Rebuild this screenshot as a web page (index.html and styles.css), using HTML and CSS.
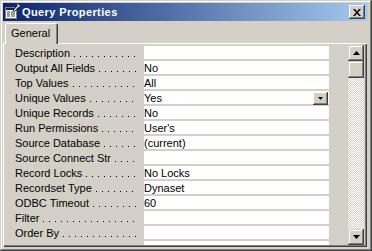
FILE: index.html
```html
<!DOCTYPE html>
<html>
    <head>
        <meta charset="utf-8" />
        <title>Query Properties</title>
        <link rel="stylesheet" href="styles.css">
    </head>
    <body>
        <div class="window">
            <div class="titlebar">
                <svg class="title-icon" width="16" height="16" viewBox="0 0 16 16">
                    <rect x="1.5" y="3.5" width="11" height="11" fill="#fff" stroke="#808080" />
                    <rect x="2" y="4" width="10" height="2" fill="#0a246a" />
                    <path d="M3 8h3M7 8h4M3 10h3M7 10h4M3 12h3M7 12h4" stroke="#404040" />
                    <path d="M9 6l5-5 1.5 1.5-5 5z" fill="#d4d0c8" stroke="#000" stroke-width="0.8" />
                    <path d="M13 1h2v2" stroke="#fff" fill="none" />
                </svg>
                <span class="title">Query Properties</span>
                <div class="close">
                    <svg width="8" height="7" viewBox="0 0 8 7">
                        <path d="M0 0h2l2 2.5 2-2.5h2l-3 3.5 3 3.5h-2l-2-2.5-2 2.5h-2l3-3.5z" fill="#000" />
                    </svg>
                </div>
            </div>

            <div class="tabs">
                <div class="tab">General</div>
            </div>

            <div class="panel">
                <div class="sheet">
                    <div class="row"><span class="label">Description<span class="dots"></span></span><span class="value"></span></div>
                    <div class="row"><span class="label">Output All Fields<span class="dots"></span></span><span class="value">No</span></div>
                    <div class="row"><span class="label">Top Values<span class="dots"></span></span><span class="value">All</span></div>
                    <div class="row"><span class="label">Unique Values<span class="dots"></span></span><span class="value combo"><span class="combo-text">Yes</span><span class="drop"><svg width="5" height="3" viewBox="0 0 5 3"><path d="M0 0h5l-2.5 3z" fill="#000" /></svg></span></span></div>
                    <div class="row"><span class="label">Unique Records<span class="dots"></span></span><span class="value">No</span></div>
                    <div class="row"><span class="label">Run Permissions<span class="dots"></span></span><span class="value">User's</span></div>
                    <div class="row"><span class="label">Source Database<span class="dots"></span></span><span class="value">(current)</span></div>
                    <div class="row"><span class="label">Source Connect Str<span class="dots"></span></span><span class="value"></span></div>
                    <div class="row"><span class="label">Record Locks<span class="dots"></span></span><span class="value">No Locks</span></div>
                    <div class="row"><span class="label">Recordset Type<span class="dots"></span></span><span class="value">Dynaset</span></div>
                    <div class="row"><span class="label">ODBC Timeout<span class="dots"></span></span><span class="value">60</span></div>
                    <div class="row"><span class="label">Filter<span class="dots"></span></span><span class="value"></span></div>
                    <div class="row"><span class="label">Order By<span class="dots"></span></span><span class="value"></span></div>
                    <div class="row"><span class="label"></span><span class="value"></span></div>
                </div>

                <div class="scrollbar">
                    <div class="sb-btn">
                        <svg width="7" height="4" viewBox="0 0 7 4"><path d="M3.5 0l3.5 4h-7z" fill="#000" /></svg>
                    </div>
                    <div class="sb-track">
                        <div class="sb-thumb"></div>
                    </div>
                    <div class="sb-btn">
                        <svg width="7" height="4" viewBox="0 0 7 4"><path d="M0 0h7l-3.5 4z" fill="#000" /></svg>
                    </div>
                </div>
            </div>
        </div>
    </body>
</html>
```

FILE: styles.css
```css
html, body { margin: 0; padding: 0; width: 100%; height: 100%; overflow: hidden }
body {
    background: #d4d0c8;
}

/* Win2000 style window frame */
.window {
    width: 372px;
    height: 251px;
    box-sizing: border-box;
    padding: 3px 4px 0 3px;
    background: #d4d0c8;
    box-shadow: inset -1px -1px #404040, inset 1px 1px #d4d0c8, inset -2px -2px #808080, inset 2px 2px #fff;
    font: 11px "Liberation Sans", Arial, sans-serif;
    color: #000;
}

.titlebar {
    height: 18px;
    display: flex;
    align-items: center;
    padding: 0 3px 0 1px;
    background: linear-gradient(to right, #0a246a, #a6caf0);
}
.title-icon {
    flex: none;
    margin-right: 2px;
}
.title {
    color: #fff;
    font-weight: bold;
    letter-spacing: 0.4px;
}
.close {
    margin-left: auto;
    width: 16px;
    height: 14px;
    display: flex;
    align-items: center;
    justify-content: center;
    background: #d4d0c8;
    box-shadow: inset -1px -1px #404040, inset 1px 1px #fff, inset -2px -2px #808080;
}

.tabs {
    height: 21px;
    box-sizing: border-box;
    margin-top: 1px;
    padding: 1px 0 0 2px;
    display: flex;
    align-items: flex-start;
}
.tab {
    position: relative;
    z-index: 1;
    height: 21px;
    box-sizing: border-box;
    padding: 3px 0 0 5px;
    width: 53px;
    background: #d4d0c8;
    border-left: 1px solid #fff;
    border-top: 1px solid #fff;
    border-right: 1px solid #404040;
    border-radius: 2px 2px 0 0;
    box-shadow: inset -1px 0 #808080;
}

/* property sheet */
.panel {
    height: 204px;
    width: 364px;
    box-sizing: border-box;
    padding: 3px 3px 0 1px;
    display: flex;
    align-items: flex-start;
    box-shadow: inset 1px 1px #fff, inset -1px -1px #404040, inset -2px -2px #808080;
}
.sheet {
    flex: none;
    width: 325px;
    height: 199px;
    overflow: hidden;
}
.row {
    display: flex;
    height: 13px;
    margin-bottom: 2px;
    padding-left: 11px;
}
.label, .value {
    height: 13px;
    box-sizing: border-box;
    padding-top: 1px;
    line-height: 12px;
    white-space: nowrap;
}
.label {
    flex: none;
    display: flex;
    width: 122px;
    margin-right: 7px;
}
/* dot leader after each label */
.dots {
    flex: 1;
    margin-left: 4px;
    background-image: linear-gradient(to right, #000 1px, transparent 1px);
    background-size: 6px 1px;
    background-repeat: repeat-x;
    background-position: 0 9px;
}
.value {
    flex: none;
    width: 185px;
    background: #fff;
    overflow: hidden;
}
.combo {
    display: flex;
    overflow: visible;
}
.combo-text {
    flex: 1;
}
.drop {
    flex: none;
    width: 15px;
    height: 13px;
    margin: 0 1px 0 0;
    display: flex;
    align-items: center;
    justify-content: center;
    background: #d4d0c8;
    box-shadow: inset -1px -1px #404040, inset 1px 1px #fff, inset -2px -2px #808080;
}

.scrollbar {
    flex: none;
    width: 16px;
    height: 200px;
    margin: -1px 0 0 19px;
    display: flex;
    flex-direction: column;
}
.sb-btn {
    flex: none;
    height: 16px;
    display: flex;
    align-items: center;
    justify-content: center;
    background: #d4d0c8;
    box-shadow: inset -1px -1px #404040, inset 1px 1px #d4d0c8, inset -2px -2px #808080, inset 2px 2px #fff;
}
.sb-track {
    flex: 1;
    background-image: repeating-conic-gradient(#fff 0 25%, #d4d0c8 0 50%);
    background-size: 2px 2px;
}
.sb-thumb {
    height: 17px;
    background: #d4d0c8;
    box-shadow: inset -1px -1px #404040, inset 1px 1px #d4d0c8, inset -2px -2px #808080, inset 2px 2px #fff;
}
```
